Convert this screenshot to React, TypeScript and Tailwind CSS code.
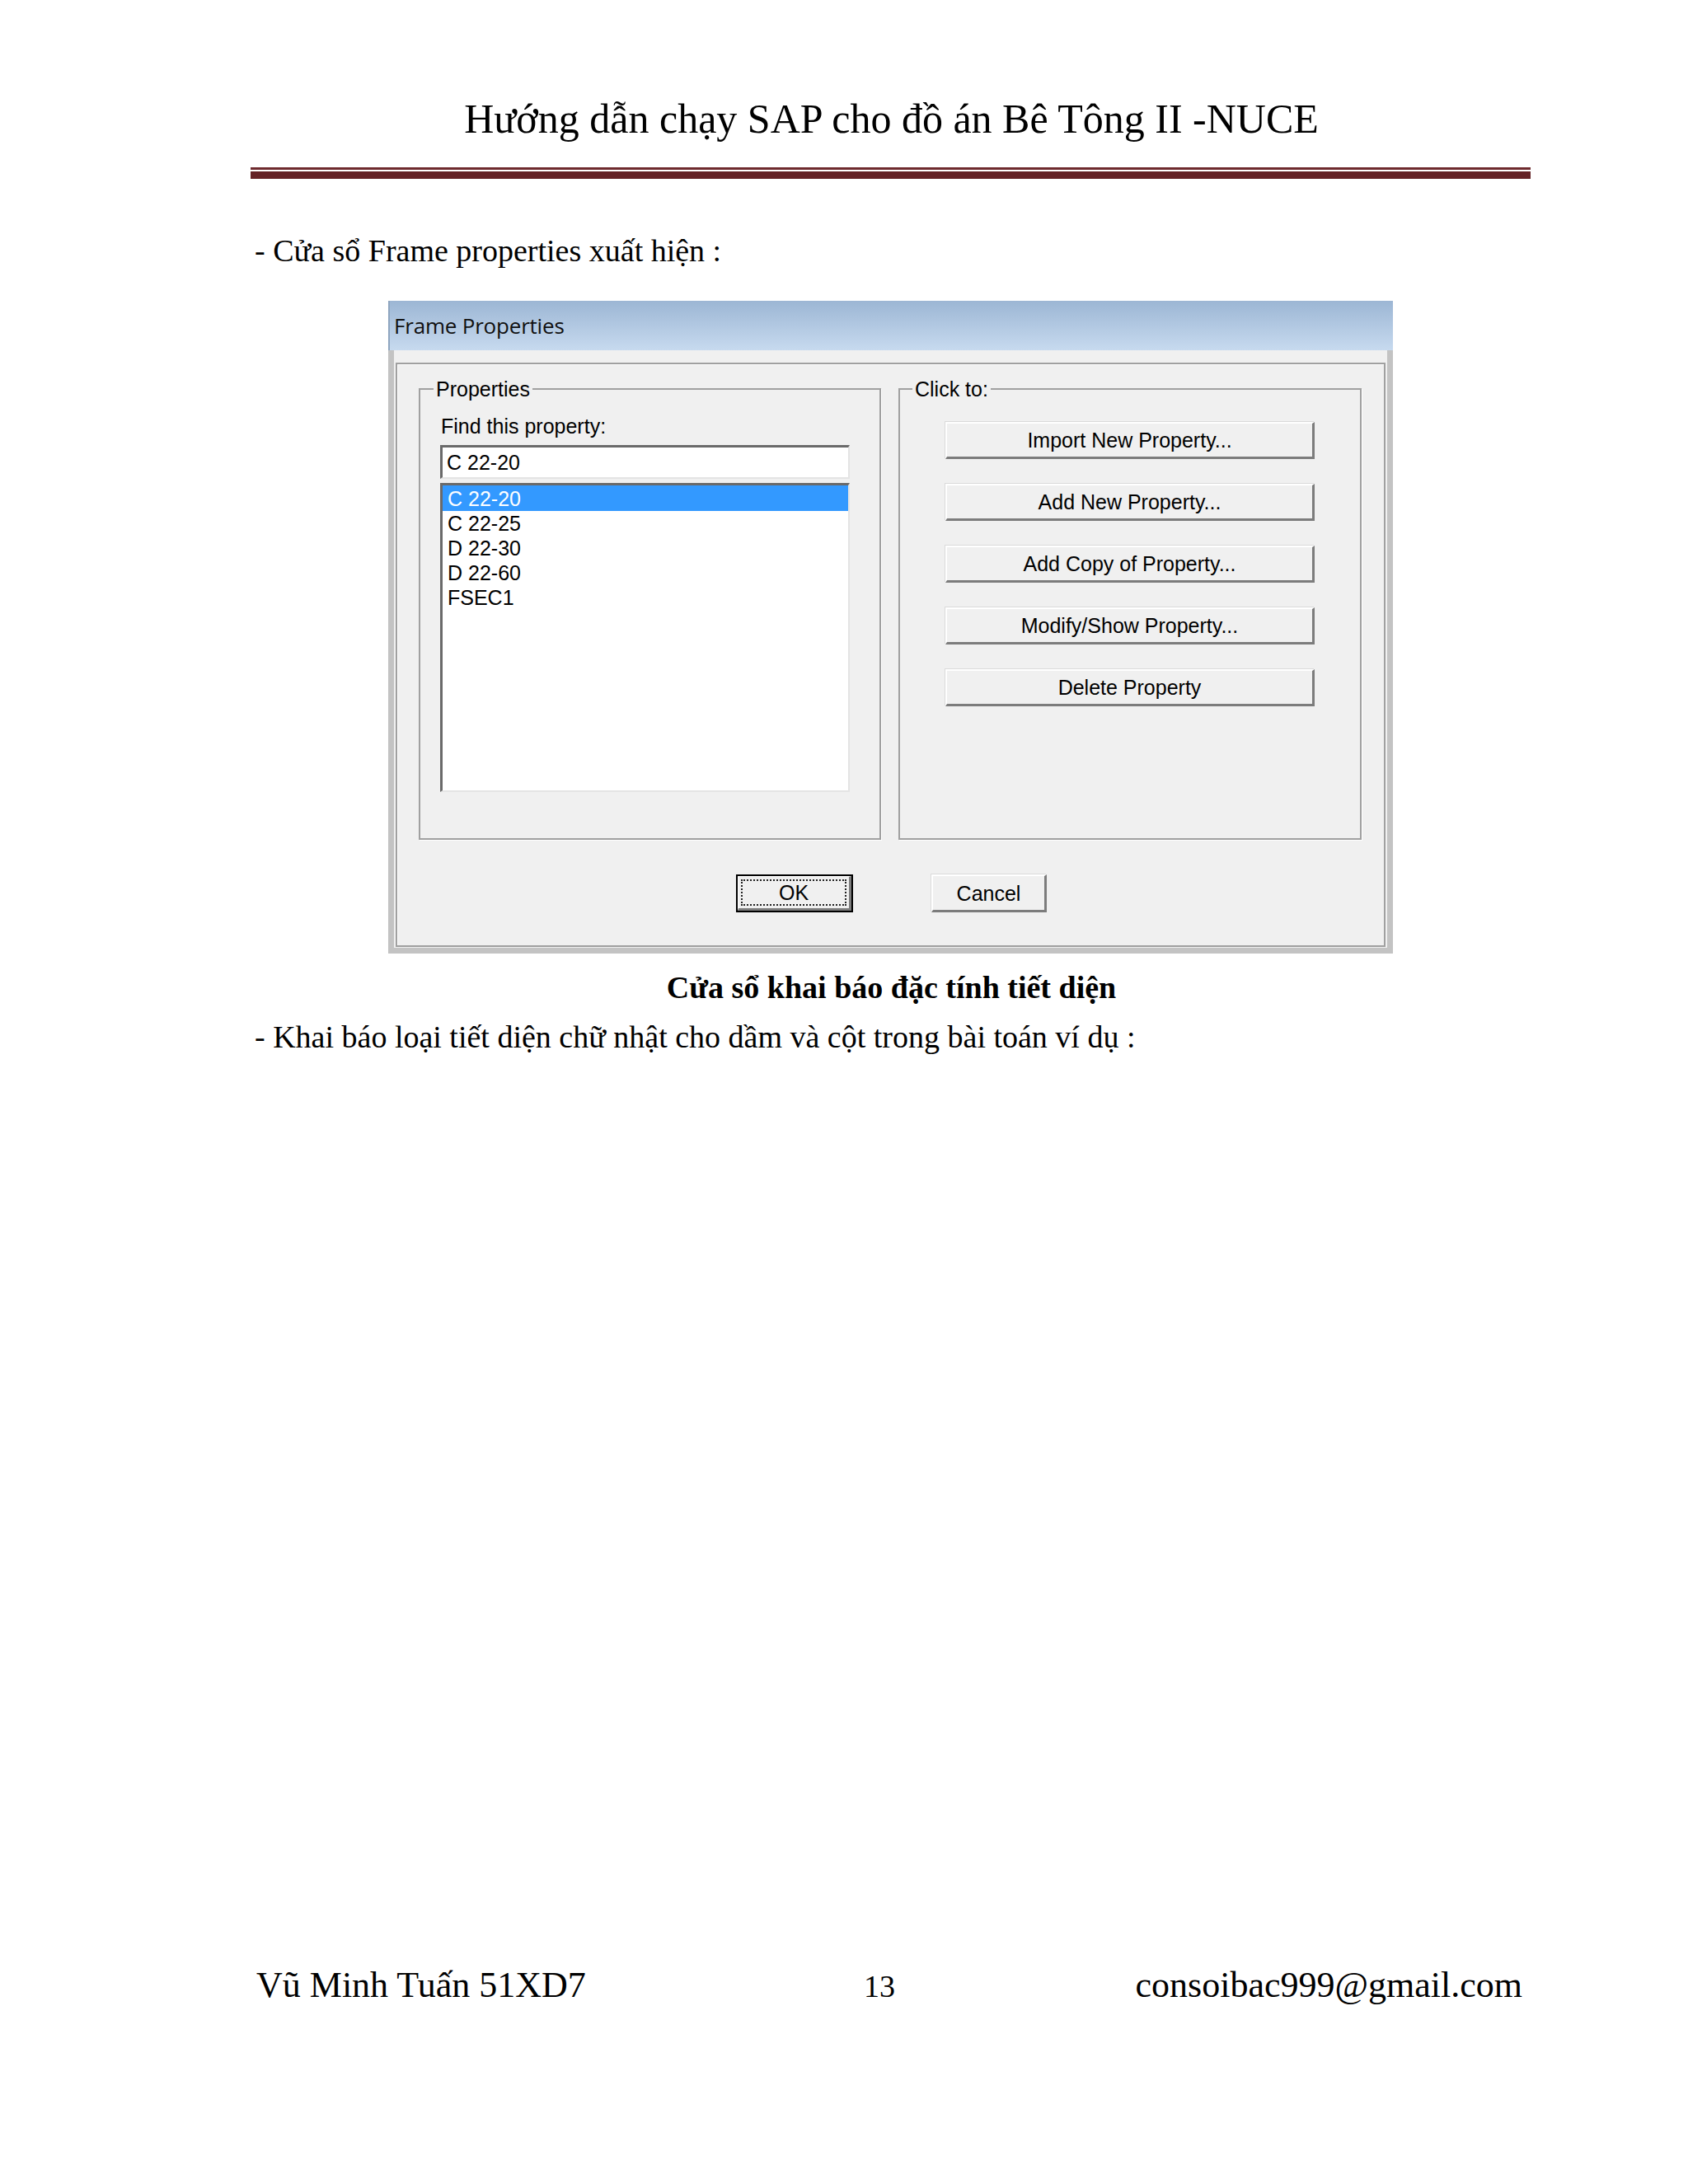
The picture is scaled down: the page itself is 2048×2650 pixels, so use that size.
import React from 'react';

const items = ['C 22-20', 'C 22-25', 'D 22-30', 'D 22-60', 'FSEC1'];
const actions = [
  'Import New Property...',
  'Add New Property...',
  'Add Copy of Property...',
  'Modify/Show Property...',
  'Delete Property',
];

// raised win32-style push button
const RaisedButton: React.FC<{ label: string; className?: string }> = ({ label, className }) => (
  <div
    className={
      'flex items-center justify-center bg-[#f0f0f0] border-t-2 border-l-2 border-t-white border-l-white border-b-[3px] border-r-[3px] border-b-[#7c7c7c] border-r-[#7c7c7c] shadow-[-1px_-1px_0_#dadada] ' +
      (className || '')
    }
  >
    {label}
  </div>
);

const FrameProperties: React.FC = () => {
  return (
    <div className="ml-[167px] mt-[36px] w-[1219px] font-['Liberation_Sans',Arial,sans-serif] text-[25px] leading-[30px] text-black">
      {/* Title bar */}
      <div className="h-[60px] flex items-center pl-[5px] bg-linear-to-b from-[#9cb6d4] to-[#c7daef] border-l-2 border-[#8fa6c0]">
        <span className="font-['Open_Sans',sans-serif] text-[26px] text-[#111] tracking-[-0.2px]">Frame Properties</span>
      </div>

      {/* Window body */}
      <div className="bg-[#f0f0f0] border-x-[7px] border-b-[7px] border-[#c3c3c3] px-[2px] pt-[15px] pb-px">
        <div className="border-2 border-[#a0a0a0] shadow-[inset_1px_1px_0_#fff] pt-[15px] pb-[40px]">
          <div className="grid grid-cols-[561px_562px] gap-[21px] pl-[26px]">
            {/* Properties group */}
            <fieldset className="h-[562px] border-2 border-[#a0a0a0] shadow-[1px_1px_0_#fff]">
              <legend className="ml-[16px] px-[3px]">Properties</legend>
              <div className="pl-[24px]">
                <div className="mt-[15px] pl-px">Find this property:</div>
                <div className="mt-[8px] w-[497px] h-[41px] bg-white border-t-[3px] border-l-[3px] border-t-[#6a6a6a] border-l-[#6a6a6a] border-b-2 border-r-2 border-b-[#e4e4e4] border-r-[#e4e4e4] pl-[5px] flex items-center">
                  C 22-20
                </div>
                <div className="mt-[5px] w-[497px] h-[375px] bg-white border-t-[3px] border-l-[3px] border-t-[#6a6a6a] border-l-[#6a6a6a] border-b-2 border-r-2 border-b-[#e4e4e4] border-r-[#e4e4e4]">
                  {items.map((it, i) => (
                    <div
                      key={it}
                      className={
                        i === 0
                          ? 'h-[31px] flex items-center pl-[6px] bg-[#3399ff] text-white'
                          : 'h-[30px] flex items-center pl-[6px]'
                      }
                    >
                      {it}
                    </div>
                  ))}
                </div>
              </div>
            </fieldset>

            {/* Click to group */}
            <fieldset className="h-[562px] border-2 border-[#a0a0a0] shadow-[1px_1px_0_#fff]">
              <legend className="ml-[15px] px-[3px]">Click to:</legend>
              <div className="pl-[55px] pt-[25px] flex flex-col gap-[30px]">
                {actions.map((a) => (
                  <RaisedButton key={a} label={a} className="w-[448px] h-[45px]" />
                ))}
              </div>
            </fieldset>
          </div>

          {/* OK / Cancel */}
          <div className="mt-[42px] flex justify-center gap-[95px] pl-[2px]">
            <div className="w-[142px] h-[46px] border-2 border-black">
              <div className="relative h-full flex items-center justify-center bg-[#f0f0f0] border-t border-l border-white border-b-[3px] border-r-[3px] border-b-[#7c7c7c] border-r-[#7c7c7c]">
                OK
                <div className="absolute inset-[3px] border-2 border-dotted border-[#222]" />
              </div>
            </div>
            <RaisedButton label="Cancel" className="w-[140px] h-[46px]" />
          </div>
        </div>
      </div>
    </div>
  );
};

const App: React.FC = () => {
  return (
    <div className="w-[2048px] h-[2650px] bg-white overflow-hidden text-black">
      <div className="ml-[304px] w-[1553px] pt-[114px] font-['Liberation_Serif','Times_New_Roman',serif]">
        {/* Header */}
        <div className="text-center text-[50px] leading-[60px] pl-[2px]">Hướng dẫn chạy SAP cho đồ án Bê Tông II -NUCE</div>
        <div className="mt-[29px]">
          <div className="h-[3px] bg-[#6e2a2e]" />
          <div className="h-[2px]" />
          <div className="h-[9px] bg-[#652226]" />
        </div>

        <div className="mt-[62px] pl-[5px] text-[38px] leading-[50px]">- Cửa sổ Frame properties xuất hiện :</div>

        <FrameProperties />

        <div className="mt-[16px] text-center font-bold text-[38px] leading-[50px] pl-[2px]">Cửa sổ khai báo đặc tính tiết diện</div>
        <div className="mt-[10px] pl-[5px] text-[38px] leading-[50px]">
          - Khai báo loại tiết diện chữ nhật cho dầm và cột trong bài toán ví dụ :
        </div>

        {/* Footer */}
        <div className="mt-[1096px] flex items-baseline leading-[60px] pr-[10px]">
          <span className="w-[744px] pl-[7px] text-[44px]">Vũ Minh Tuấn 51XD7</span>
          <span className="text-[38px]">13</span>
          <span className="ml-auto text-[44px]">consoibac999@gmail.com</span>
        </div>
      </div>
    </div>
  );
};

export default App;
